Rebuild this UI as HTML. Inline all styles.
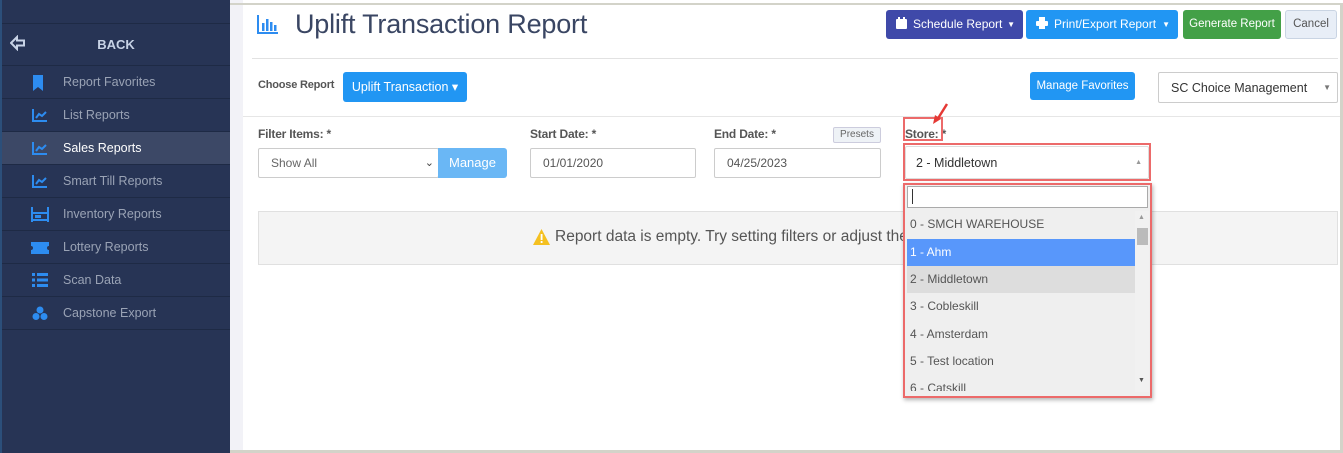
<!DOCTYPE html>
<html><head><meta charset="utf-8"><style>
*{box-sizing:border-box;margin:0;padding:0}
body{width:1343px;height:453px;overflow:hidden;background:#fff;font-family:"Liberation Sans",sans-serif;position:relative}
.a{position:absolute}
#sb{left:0;top:0;width:230px;height:453px;background:#273455;border-left:2px solid #2c4f7a;overflow:hidden}
.row{position:absolute;left:0;width:228px;height:33px;border-bottom:1px solid #1e2a45;color:#9aa3b5;font-size:12.5px;line-height:33px;padding-left:61px}
.row svg{position:absolute;left:30px;top:9px}
.btn{position:absolute;color:#fff;font-size:11.5px;border-radius:3px;text-align:center}
.lbl{position:absolute;font-size:12px;font-weight:bold;color:#555;letter-spacing:-0.2px}
.inp{position:absolute;border:1px solid #ccc;border-radius:2px;font-size:12px;color:#555;padding-left:12px;line-height:28px;height:30px;background:#fff}
.opt{position:absolute;left:907px;width:228px;height:27px;font-size:12px;color:#555;line-height:27px;padding-left:3px}
</style></head><body>
<div class="a" style="left:230px;top:0;width:13px;height:453px;background:#f2f2f7"></div>
<div class="a" style="left:0;top:3px;width:1343px;height:2px;background:#d3d3c9"></div>
<div class="a" style="left:1340px;top:3px;width:3px;height:450px;background:#d3d3c9"></div>
<div class="a" style="left:0;top:450px;width:1343px;height:3px;background:#d3d3c9"></div>
<div id="sb" class="a">
 <div class="a" style="left:0;top:0;width:228px;height:24px;border-bottom:1px solid #1e2a45"></div>
 <div class="a" style="left:0;top:24px;width:228px;height:42px;border-bottom:1px solid #1e2a45;color:#c8d3e6;font-weight:bold;font-size:13px;line-height:42px;text-align:center">BACK</div>
 <svg class="a" style="left:8px;top:35px" width="16" height="16" viewBox="0 0 16 16"><path d="M1 8 L7 2 V5.5 H14 V10.5 H7 V14 Z" fill="none" stroke="#c8d3e6" stroke-width="2"/></svg>
 <div class="row" style="top:66px"><svg width="12" height="16"><path d="M1 0H11V16L6 12L1 16Z" fill="#2d8cf0"/></svg>Report Favorites</div>
 <div class="row" style="top:99px"><svg width="16" height="14"><path d="M1 1V13H15" stroke="#2d8cf0" stroke-width="2" fill="none"/><path d="M4 10L7 6L10 8L14 4" stroke="#2d8cf0" stroke-width="2" fill="none"/></svg>List Reports</div>
 <div class="row" style="top:132px;background:#3c4866;color:#fff">
 <svg width="16" height="14"><path d="M1 1V13H15" stroke="#2d8cf0" stroke-width="2" fill="none"/><path d="M4 10L7 6L10 8L14 4" stroke="#2d8cf0" stroke-width="2" fill="none"/></svg>Sales Reports</div>
 <div class="row" style="top:165px"><svg width="16" height="14"><path d="M1 1V13H15" stroke="#2d8cf0" stroke-width="2" fill="none"/><path d="M4 10L7 6L10 8L14 4" stroke="#2d8cf0" stroke-width="2" fill="none"/></svg>Smart Till Reports</div>
 <div class="row" style="top:198px"><svg width="18" height="15" style="left:29px"><path d="M1 0V15M17 0V15M1 13H17M1 6H17" stroke="#2d8cf0" stroke-width="2" fill="none"/><rect x="4" y="8" width="6" height="3" fill="#2d8cf0"/></svg>Inventory Reports</div>
 <div class="row" style="top:231px"><svg width="18" height="12" style="left:29px;top:11px"><path d="M0 0H18V4A2 2 0 0 0 18 8V12H0V8A2 2 0 0 0 0 4Z" fill="#2d8cf0"/></svg>Lottery Reports</div>
 <div class="row" style="top:264px"><svg width="16" height="14"><g fill="#2d8cf0"><rect x="0" y="0" width="3" height="3"/><rect x="5" y="0" width="11" height="3"/><rect x="0" y="5.5" width="3" height="3"/><rect x="5" y="5.5" width="11" height="3"/><rect x="0" y="11" width="3" height="3"/><rect x="5" y="11" width="11" height="3"/></g></svg>Scan Data</div>
 <div class="row" style="top:297px"><svg width="16" height="15"><g fill="#2d8cf0"><circle cx="8" cy="4" r="3.5"/><circle cx="4" cy="10.5" r="3.5"/><circle cx="12" cy="10.5" r="3.5"/></g></svg>Capstone Export</div>
</div>
<!-- header -->
<svg class="a" style="left:257px;top:14px" width="22" height="20"><path d="M1 1V19H21" stroke="#2d8cf0" stroke-width="2" fill="none"/><g fill="#2d8cf0"><rect x="5" y="9" width="2.5" height="8"/><rect x="9" y="5" width="2.5" height="12"/><rect x="13" y="8" width="2.5" height="9"/><rect x="17" y="11" width="2.5" height="6"/></g></svg>
<div class="a" style="left:295px;top:9px;font-size:27px;color:#3a4663;letter-spacing:-0.2px">Uplift Transaction Report</div>
<div class="btn" style="left:886px;top:10px;width:137px;height:29px;background:#3f49a9;line-height:29px;text-align:left;padding-left:27px;font-size:12px">Schedule Report<span style="position:absolute;right:8px;font-size:8px">▼</span></div>
<svg class="a" style="left:896px;top:17px" width="11" height="12"><rect x="0" y="2" width="11" height="10" rx="1" fill="#fff"/><rect x="2" y="0" width="2" height="3" fill="#fff"/><rect x="7" y="0" width="2" height="3" fill="#fff"/></svg>
<div class="btn" style="left:1026px;top:10px;width:152px;height:29px;background:#2196f3;line-height:29px;text-align:left;padding-left:28px;font-size:12px">Print/Export Report<span style="position:absolute;right:8px;font-size:8px">▼</span></div>
<svg class="a" style="left:1036px;top:17px" width="12" height="12"><rect x="3" y="0" width="6" height="4" fill="#fff"/><rect x="0" y="4" width="12" height="5" rx="1" fill="#fff"/><rect x="3" y="8" width="6" height="4" fill="#fff"/></svg>
<div class="btn" style="left:1183px;top:10px;width:98px;height:29px;background:#43a047;line-height:29px">Generate Report</div>
<div class="btn" style="left:1285px;top:10px;width:52px;height:29px;background:#e8eef7;border:1px solid #c9d4e3;color:#555;line-height:27px">Cancel</div>
<div class="a" style="left:252px;top:58px;width:1086px;height:1px;background:#e2e2e2"></div>
<div class="lbl" style="left:258px;top:79px;font-size:11px">Choose Report</div>
<div class="btn" style="left:343px;top:72px;width:124px;height:30px;background:#2196f3;line-height:30px;font-size:12.5px">Uplift Transaction ▾</div>
<div class="btn" style="left:1030px;top:72px;width:105px;height:28px;background:#2196f3;line-height:28px;font-size:11.5px">Manage Favorites</div>
<div class="inp" style="left:1158px;top:72px;width:180px;height:31px;line-height:30px;font-size:12.5px;color:#333">SC Choice Management<span style="position:absolute;right:6px;font-size:8px;color:#777">▼</span></div>
<div class="a" style="left:243px;top:116px;width:1097px;height:1px;background:#e6e6e6"></div>
<div class="lbl" style="left:258px;top:127px">Filter Items: *</div>
<div class="inp" style="left:258px;top:148px;width:181px;color:#666">Show All<span style="position:absolute;right:4px;font-size:11px;color:#444">⌄</span></div>
<div class="btn" style="left:438px;top:148px;width:69px;height:30px;background:#6ab7f5;line-height:30px;font-size:13px;border-radius:0 3px 3px 0">Manage</div>
<div class="lbl" style="left:530px;top:127px">Start Date: *</div>
<div class="inp" style="left:530px;top:148px;width:166px">01/01/2020</div>
<div class="lbl" style="left:714px;top:127px">End Date: *</div>
<div class="a" style="left:833px;top:127px;width:48px;height:16px;background:#eef2f6;border:1px solid #ccd;border-radius:2px;font-size:10px;color:#666;text-align:center;line-height:14px">Presets</div>
<div class="inp" style="left:714px;top:148px;width:167px">04/25/2023</div>
<div class="lbl" style="left:905px;top:127px">Store: *</div>
<div class="a" style="left:903px;top:117px;width:40px;height:24px;border:2px solid #ec6a6a"></div>
<svg class="a" style="left:930px;top:102px" width="20" height="24"><path d="M17 2L7 18" stroke="#e53935" stroke-width="2.5"/><path d="M3 22L5 13L11 17Z" fill="#e53935"/></svg>
<div class="a" style="left:903px;top:143px;width:248px;height:38px;border:2px solid #ec6a6a"></div>
<div class="inp" style="left:905px;top:146px;width:244px;height:33px;line-height:32px;font-size:12.5px;color:#333;padding-left:10px;border-color:#ddd">2 - Middletown<span style="position:absolute;right:6px;font-size:7px;color:#999">▲</span></div>
<!-- empty report -->
<div class="a" style="left:258px;top:211px;width:1080px;height:54px;background:#f4f4f4;border:1px solid #e0e0e0"></div>
<svg class="a" style="left:533px;top:229px" width="17" height="16"><path d="M8.5 0L17 16H0Z" fill="#f4c020"/><rect x="7.7" y="5" width="1.8" height="6" fill="#fff"/><rect x="7.7" y="12" width="1.8" height="2" fill="#fff"/></svg>
<div class="a" style="left:555px;top:228px;font-size:15.5px;color:#555">Report data is empty. Try setting filters or adjust the</div>
<!-- dropdown list -->
<div class="a" style="left:903px;top:183px;width:249px;height:215px;border:2px solid #ec6a6a;background:#efefef;box-shadow:1px 2px 4px rgba(0,0,0,.3)"></div>
<div class="a" style="left:907px;top:186px;width:241px;height:22px;background:#fff;border:1px solid #aaa"></div>
<div class="a" style="left:912px;top:189px;width:1px;height:15px;background:#333"></div>
<div class="opt" style="top:211px">0 - SMCH WAREHOUSE</div>
<div class="opt" style="top:239px;background:#5897fb;color:#fff">1 - Ahm</div>
<div class="opt" style="top:266px;background:#ddd">2 - Middletown</div>
<div class="opt" style="top:293px">3 - Cobleskill</div>
<div class="opt" style="top:321px">4 - Amsterdam</div>
<div class="opt" style="top:348px">5 - Test location</div>
<div class="opt" style="top:376px;height:15px;overflow:hidden;line-height:25px">6 - Catskill</div>
<div class="a" style="left:1135px;top:211px;width:14px;height:181px;background:#f1f1f1"></div>
<div class="a" style="left:1137px;top:228px;width:11px;height:17px;background:#bbb"></div>
<div class="a" style="left:1138px;top:214px;font-size:7px;color:#999">▲</div>
<div class="a" style="left:1138px;top:377px;font-size:7px;color:#555">▼</div>
</body></html>
